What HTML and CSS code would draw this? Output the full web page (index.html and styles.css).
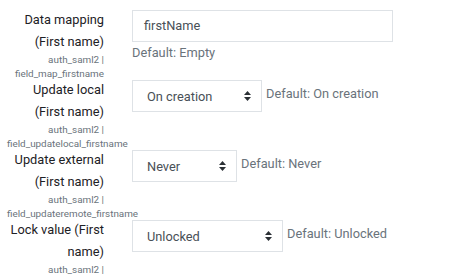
FILE: index.html
```html
<!DOCTYPE html>
<html lang="en">
<head>
    <meta charset="UTF-8">
    <title>auth_saml2 settings</title>
    <link rel="stylesheet" href="styles.css">
</head>
<body>
    <div class="setting">
        <div class="label-col">
            <div class="label">Data mapping (First name)</div>
            <div class="setting-name">auth_saml2 | field_map_firstname</div>
        </div>
        <div class="control-col">
            <div class="text-input">firstName</div>
            <div class="default block">Default: Empty</div>
        </div>
    </div>

    <div class="setting">
        <div class="label-col">
            <div class="label">Update local (First name)</div>
            <div class="setting-name">auth_saml2 | field_updatelocal_firstname</div>
        </div>
        <div class="control-col inline">
            <div class="select w-creation">
                <span>On creation</span>
                <svg class="caret" width="7" height="10" viewBox="0 0 7 10"><path d="M3.5 0L7 4H0z M3.5 10L0 6h7z" fill="#2b3035"/></svg>
            </div>
            <div class="default">Default: On creation</div>
        </div>
    </div>

    <div class="setting">
        <div class="label-col">
            <div class="label">Update external (First name)</div>
            <div class="setting-name">auth_saml2 | field_updateremote_firstname</div>
        </div>
        <div class="control-col inline">
            <div class="select w-never">
                <span>Never</span>
                <svg class="caret" width="7" height="10" viewBox="0 0 7 10"><path d="M3.5 0L7 4H0z M3.5 10L0 6h7z" fill="#2b3035"/></svg>
            </div>
            <div class="default">Default: Never</div>
        </div>
    </div>

    <div class="setting">
        <div class="label-col">
            <div class="label">Lock value (First name)</div>
            <div class="setting-name">auth_saml2 | field_lock_firstname</div>
        </div>
        <div class="control-col inline">
            <div class="select w-unlocked">
                <span>Unlocked</span>
                <svg class="caret" width="7" height="10" viewBox="0 0 7 10"><path d="M3.5 0L7 4H0z M3.5 10L0 6h7z" fill="#2b3035"/></svg>
            </div>
            <div class="default">Default: Unlocked</div>
        </div>
    </div>
</body>
</html>
```

FILE: styles.css
```css
body {
    margin: 0;
    padding: 9px 0 0 7px;
    font-family: Roboto, "Noto Sans", sans-serif;
    color: #1d2125;
    background: #fff;
    overflow: hidden;
    height: 277px;
    box-sizing: border-box;
}
.setting {
    display: flex;
    gap: 28px;
    height: 70px;
}
.label-col {
    width: 97px;
    flex-shrink: 0;
    text-align: right;
}
.label {
    font-size: 12.8px;
    line-height: 22px;
}
.setting-name {
    font-size: 9.9px;
    line-height: 14px;
    color: #6a737b;
}
.control-col {
    padding-top: 1px;
}
.control-col.inline {
    display: flex;
    align-items: flex-start;
    gap: 4px;
}
.text-input {
    box-sizing: border-box;
    width: 261px;
    height: 32px;
    border: 1px solid #dee2e6;
    padding: 0 11px;
    font-size: 12.8px;
    line-height: 30px;
    color: #495057;
}
.select {
    display: flex;
    align-items: center;
    justify-content: space-between;
    box-sizing: border-box;
    height: 32px;
    border: 1px solid #dee2e6;
    padding: 0 10px 0 14px;
    font-size: 12.8px;
    color: #495057;
}
.w-creation { width: 130px; }
.w-never { width: 105px; }
.w-unlocked { width: 151px; }
.default {
    font-size: 12.8px;
    line-height: 28px;
    color: #6a737b;
}
.default.block {
    line-height: 22px;
}
```
